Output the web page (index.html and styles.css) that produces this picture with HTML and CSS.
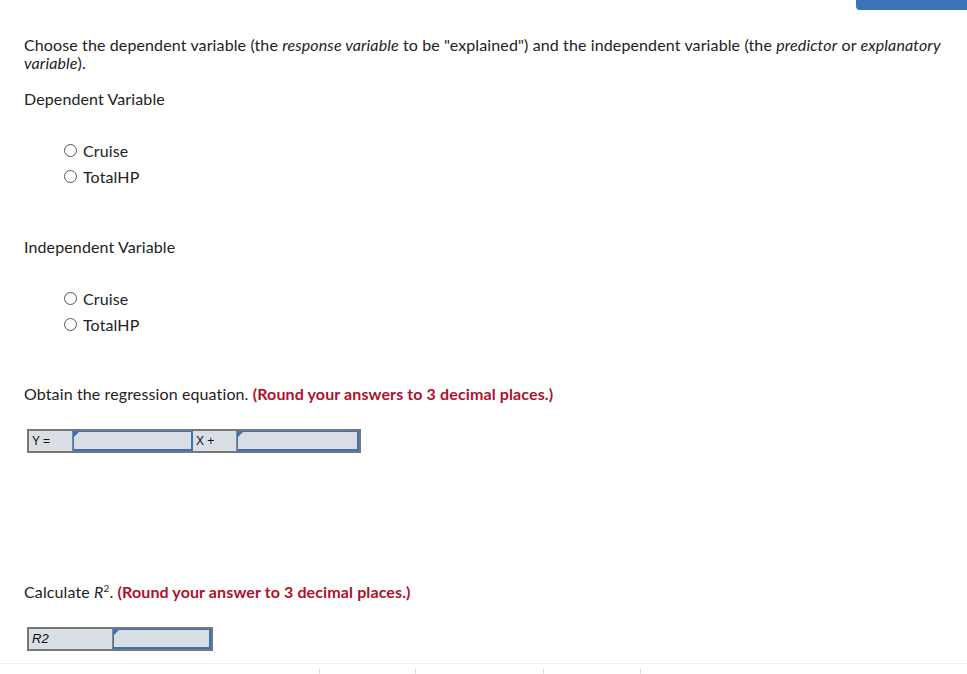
FILE: index.html
```html
<!DOCTYPE html>
<html>
<head>
<meta charset="utf-8">
<link rel="stylesheet" href="styles.css">
</head>
<body>
<div class="topbar"><div class="topbtn"></div></div>
<main class="content">
  <p class="prompt">Choose the dependent variable (the <em>response variable</em> to be "explained") and the independent variable (the <em>predictor</em> or <em>explanatory variable</em>).</p>

  <p class="label">Dependent Variable</p>
  <ul class="radios">
    <li><span class="radio"></span>Cruise</li>
    <li><span class="radio"></span>TotalHP</li>
  </ul>

  <p class="label label-ind">Independent Variable</p>
  <ul class="radios">
    <li><span class="radio"></span>Cruise</li>
    <li><span class="radio"></span>TotalHP</li>
  </ul>

  <p class="question">Obtain the regression equation. <strong class="hint">(Round your answers to 3 decimal places.)</strong></p>

  <div class="eqtable">
    <div class="cell lbl">Y =</div>
    <div class="cell inp"></div>
    <div class="cell lbl">X +</div>
    <div class="cell inp"></div>
  </div>

  <p class="question q2">Calculate <em>R</em><sup>2</sup>. <strong class="hint">(Round your answer to 3 decimal places.)</strong></p>

  <div class="eqtable r2">
    <div class="cell lbl r2lbl"><em>R2</em></div>
    <div class="cell inp"></div>
  </div>
</main>
<footer class="footer">
  <div class="ticks">
    <span class="tick t1"></span>
    <span class="tick t2"></span>
    <span class="tick t3"></span>
    <span class="tick t4"></span>
  </div>
</footer>
</body>
</html>
```

FILE: styles.css
```css
html, body {
  margin: 0;
  padding: 0;
  background: #fff;
}
body {
  font-family: "Lato", "Liberation Sans", sans-serif;
  font-size: 16px;
  letter-spacing: 0.12px;
  color: #222;
  width: 967px;
  height: 674px;
  overflow: hidden;
}
.topbar {
  display: flex;
  justify-content: flex-end;
  height: 10px;
}
.topbtn {
  width: 111px;
  height: 10px;
  background: #3a74b7;
  border-radius: 0 0 0 4px;
}
.content {
  padding-left: 24px;
}
p { margin: 0; }
.prompt {
  margin-top: 26px;
  line-height: 18px;
  width: 935px;
}
.label {
  margin-top: 18px;
  line-height: 18px;
}
.label-ind { margin-top: 49px; }
.radios {
  list-style: none;
  margin: 29px 0 0 40px;
  padding: 0;
}
.radios li {
  display: flex;
  align-items: center;
  height: 26px;
}
.radio {
  width: 11px;
  height: 11px;
  border: 1px solid #555;
  border-radius: 50%;
  margin-right: 6px;
  box-sizing: content-box;
}
.question {
  margin-top: 48px;
  line-height: 18px;
}
.hint {
  color: #b0102a;
  font-weight: bold;
}
.eqtable {
  display: flex;
  margin: 26px 0 0 3px;
  width: max-content;
  border: 2px solid #777;
  background: #d9dde4;
  height: 24px;
  box-sizing: border-box;
  letter-spacing: 0;
}
.cell {
  height: 20px;
  box-sizing: border-box;
}
.lbl {
  width: 44px;
  font-family: "Liberation Sans", Arial, sans-serif;
  font-size: 12px;
  line-height: 20px;
  padding-left: 3px;
  color: #111;
  border-right: 1px solid #888;
}
.inp {
  position: relative;
  width: 120px;
  border: 1px solid #3a74b7;
  border-width: 1px 2px 2px 1px;
}
.inp::before {
  content: "";
  position: absolute;
  left: 0;
  top: 0;
  border-top: 5px solid #3a74b7;
  border-right: 5px solid transparent;
  width: 0;
  height: 0;
}
.eqtable .inp:last-child { width: 122px; }
.q2 { margin-top: 130px; }
sup {
  font-size: 10px;
  line-height: 0;
}
.r2 { margin-top: 26px; }
.r2lbl {
  width: 84px;
  font-size: 13px;
  padding-left: 3px;
}
.r2 .inp:last-child { width: 98px; }
.footer {
  margin-top: 12px;
  border-top: 1px solid #eee;
}
.ticks {
  position: relative;
  height: 10px;
}
.tick {
  position: absolute;
  top: 5px;
  width: 1px;
  height: 6px;
  background: #ddd;
}
.t1 { left: 319px; }
.t2 { left: 415px; }
.t3 { left: 543px; }
.t4 { left: 640px; }
```
